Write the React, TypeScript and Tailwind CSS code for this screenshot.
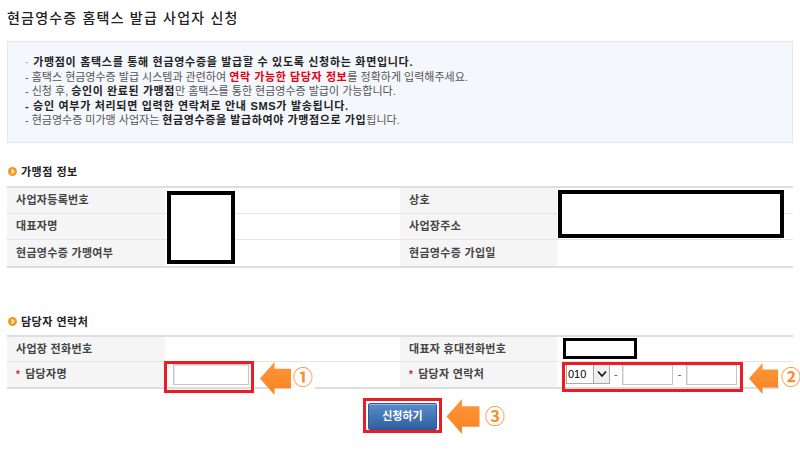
import React from 'react';

const FONT = "font-['Liberation_Sans','Noto_Sans_CJK_KR',sans-serif]";

const Arrow: React.FC<{ className?: string }> = ({ className }) => (
  <svg viewBox="0 0 32 34" className={className}>
    <defs>
      <linearGradient id="arrowFill" x1="0" y1="0" x2="0" y2="1">
        <stop offset="0" stopColor="#ff9638" />
        <stop offset="1" stopColor="#f98322" />
      </linearGradient>
    </defs>
    <polygon points="0,17 15,0 15,7 32,7 32,27 15,27 15,34" fill="url(#arrowFill)" />
  </svg>
);

const SectionTitle: React.FC<{ children: React.ReactNode; className?: string }> = ({ children, className }) => (
  <div className={`flex items-center gap-[4px] h-[16px] pl-[1px] ${className ?? ''}`}>
    <svg viewBox="0 0 10 10" className="w-[9px] h-[9px]">
      <circle cx="5" cy="5" r="5" fill="#f59a23" />
      <path d="M4 2.8 L6.2 5 L4 7.2" fill="none" stroke="#fff" strokeWidth="1.4" />
    </svg>
    <span className="text-[11px] leading-[16px] font-bold text-[#222] tracking-[0.5px]">{children}</span>
  </div>
);

const Label: React.FC<{ children: React.ReactNode; required?: boolean }> = ({ children, required }) => (
  <div className="bg-[#f5f5f5] flex items-center pl-[9px] text-[11px] font-bold text-[#444] tracking-[0.3px]">
    {required && <span className="text-[#e21b23] mr-[5px] text-[10px]">*</span>}
    {children}
  </div>
);

const TextBox: React.FC<{ className?: string }> = ({ className }) => (
  <div className={`h-[21px] bg-white border border-[#c4c4c4] shadow-[inset_1px_1px_0_#e6e6e6] ${className ?? ''}`} />
);

const Circled: React.FC<{ children: React.ReactNode; className?: string }> = ({ children, className }) => (
  <span
    className={`absolute w-[24px] h-[24px] bg-white text-center text-[20px] leading-[22px] font-bold text-[#f7902e] ${className ?? ''}`}
  >
    {children}
  </span>
);

export default function App() {
  return (
    <div className={`w-[800px] h-[455px] bg-white px-[7px] ${FONT} overflow-hidden`}>
      <h1 className="pt-[8px] text-[14px] leading-[20px] font-medium text-[#222] tracking-[1.2px]">
        현금영수증 홈택스 발급 사업자 신청
      </h1>

      <div className="mt-[13px] border border-[#e1e7ef] bg-[#f4f7fb] pt-[13px] pb-[14px] pl-[17px] text-[11px] leading-[14.6px] text-[#555]">
        <p className="font-bold text-[#222] tracking-[0.7px]">
          <span className="text-[#888] font-normal">·</span> 가맹점이 홈택스를 통해 현금영수증을 발급할 수 있도록 신청하는 화면입니다.
        </p>
        <p>
          - 홈택스 현금영수증 발급 시스템과 관련하여{' '}
          <span className="font-bold text-[#e50012] tracking-[0.6px]">연락 가능한 담당자 정보</span>를 정확하게 입력해주세요.
        </p>
        <p>
          - 신청 후, <span className="font-bold text-[#222] tracking-[0.6px]">승인이 완료된 가맹점</span>만 홈택스를 통한
          현금영수증 발급이 가능합니다.
        </p>
        <p className="font-bold text-[#222] tracking-[0.7px]">- 승인 여부가 처리되면 입력한 연락처로 안내 SMS가 발송됩니다.</p>
        <p>
          - 현금영수증 미가맹 사업자는{' '}
          <span className="font-bold text-[#222] tracking-[0.6px]">현금영수증을 발급하여야 가맹점으로 가입</span>됩니다.
        </p>
      </div>

      <SectionTitle className="mt-[21px]">가맹점 정보</SectionTitle>

      <div className="relative mt-[6px] border-t-2 border-b-2 border-[#dedede]">
        <div className="grid grid-cols-[158px_235px_157px_236px] h-[26px] border-b border-[#e6e6e6]">
          <Label>사업자등록번호</Label>
          <div />
          <Label>상호</Label>
          <div />
        </div>
        <div className="grid grid-cols-[158px_235px_157px_236px] h-[26px] border-b border-[#e6e6e6]">
          <Label>대표자명</Label>
          <div />
          <Label>사업장주소</Label>
          <div />
        </div>
        <div className="grid grid-cols-[158px_235px_157px_236px] h-[26px]">
          <Label>현금영수증 가맹여부</Label>
          <div />
          <Label>현금영수증 가입일</Label>
          <div />
        </div>
        {/* redaction boxes */}
        <div className="absolute left-[160px] top-[3px] w-[68px] h-[73px] border-[4px] border-black bg-white" />
        <div className="absolute left-[551px] top-[2px] w-[226px] h-[48px] border-[4px] border-black bg-white" />
      </div>

      <SectionTitle className="mt-[46px]">담당자 연락처</SectionTitle>

      <div className="relative mt-[5px] border-t-2 border-b-2 border-[#dedede]">
        <div className="grid grid-cols-[158px_235px_157px_236px] h-[25px] border-b border-[#e6e6e6]">
          <Label>사업장 전화번호</Label>
          <div />
          <Label>대표자 휴대전화번호</Label>
          <div />
        </div>
        <div className="grid grid-cols-[158px_235px_157px_236px] h-[25px]">
          <Label required>담당자명</Label>
          <div className="flex items-center pl-[8px]">
            <TextBox className="w-[76px]" />
          </div>
          <Label required>담당자 연락처</Label>
          <div className="flex items-center pl-[9px] text-[11px] text-[#555]">
            <div className="flex h-[20px] w-[44px] border border-[#a9a9a9] bg-white">
              <span className="flex-1 pl-[1px] leading-[18px] text-[11px] text-black">010</span>
              <span className="w-[16px] border-l border-[#a9a9a9] bg-[#f0f0f0] flex items-center justify-center">
                <svg viewBox="0 0 10 8" className="w-[10px] h-[8px]">
                  <path d="M1 1.5 L5 6 L9 1.5" fill="none" stroke="#111" strokeWidth="1.6" />
                </svg>
              </span>
            </div>
            <span className="mx-[4px]">-</span>
            <TextBox className="w-[51px]" />
            <span className="mx-[5px]">-</span>
            <TextBox className="w-[51px]" />
          </div>
        </div>

        {/* redaction */}
        <div className="absolute left-[556px] top-[1px] w-[74px] h-[21px] border-[3px] border-black bg-white" />

        {/* annotations */}
        <div className="absolute left-[157px] top-[24px] w-[90px] h-[32px] border-[3px] border-[#ec1c24]" />
        <Arrow className="absolute left-[253px] top-[25px] w-[31px] h-[33px]" />
        <Circled className="left-[284px] top-[30px]">①</Circled>

        <div className="absolute left-[555px] top-[25px] w-[181px] h-[30px] border-[3px] border-[#ec1c24]" />
        <Arrow className="absolute left-[741px] top-[26px] w-[31px] h-[31px]" />
        <Circled className="left-[772px] top-[30px]">②</Circled>
      </div>

      <div className="flex justify-center pt-[14px] pl-[5px]">
        <div className="relative">
          <div className="absolute -left-[5px] -right-[5px] -top-[5px] -bottom-[3px] border-[3px] border-[#ec1c24]" />
          <button
            type="button"
            className="relative w-[69px] h-[27px] rounded-[2px] border border-[#2b5a96] bg-gradient-to-b from-[#5a8bcb] to-[#2f609f] text-white text-[11px] font-bold leading-[25px] shadow-[inset_0_1px_0_rgba(255,255,255,0.35)]"
          >
            신청하기
          </button>
          <Arrow className="absolute left-[77px] -top-[4px] w-[36px] h-[35px]" />
          <Circled className="left-[115px] top-[3px] bg-transparent">③</Circled>
        </div>
      </div>
    </div>
  );
}
